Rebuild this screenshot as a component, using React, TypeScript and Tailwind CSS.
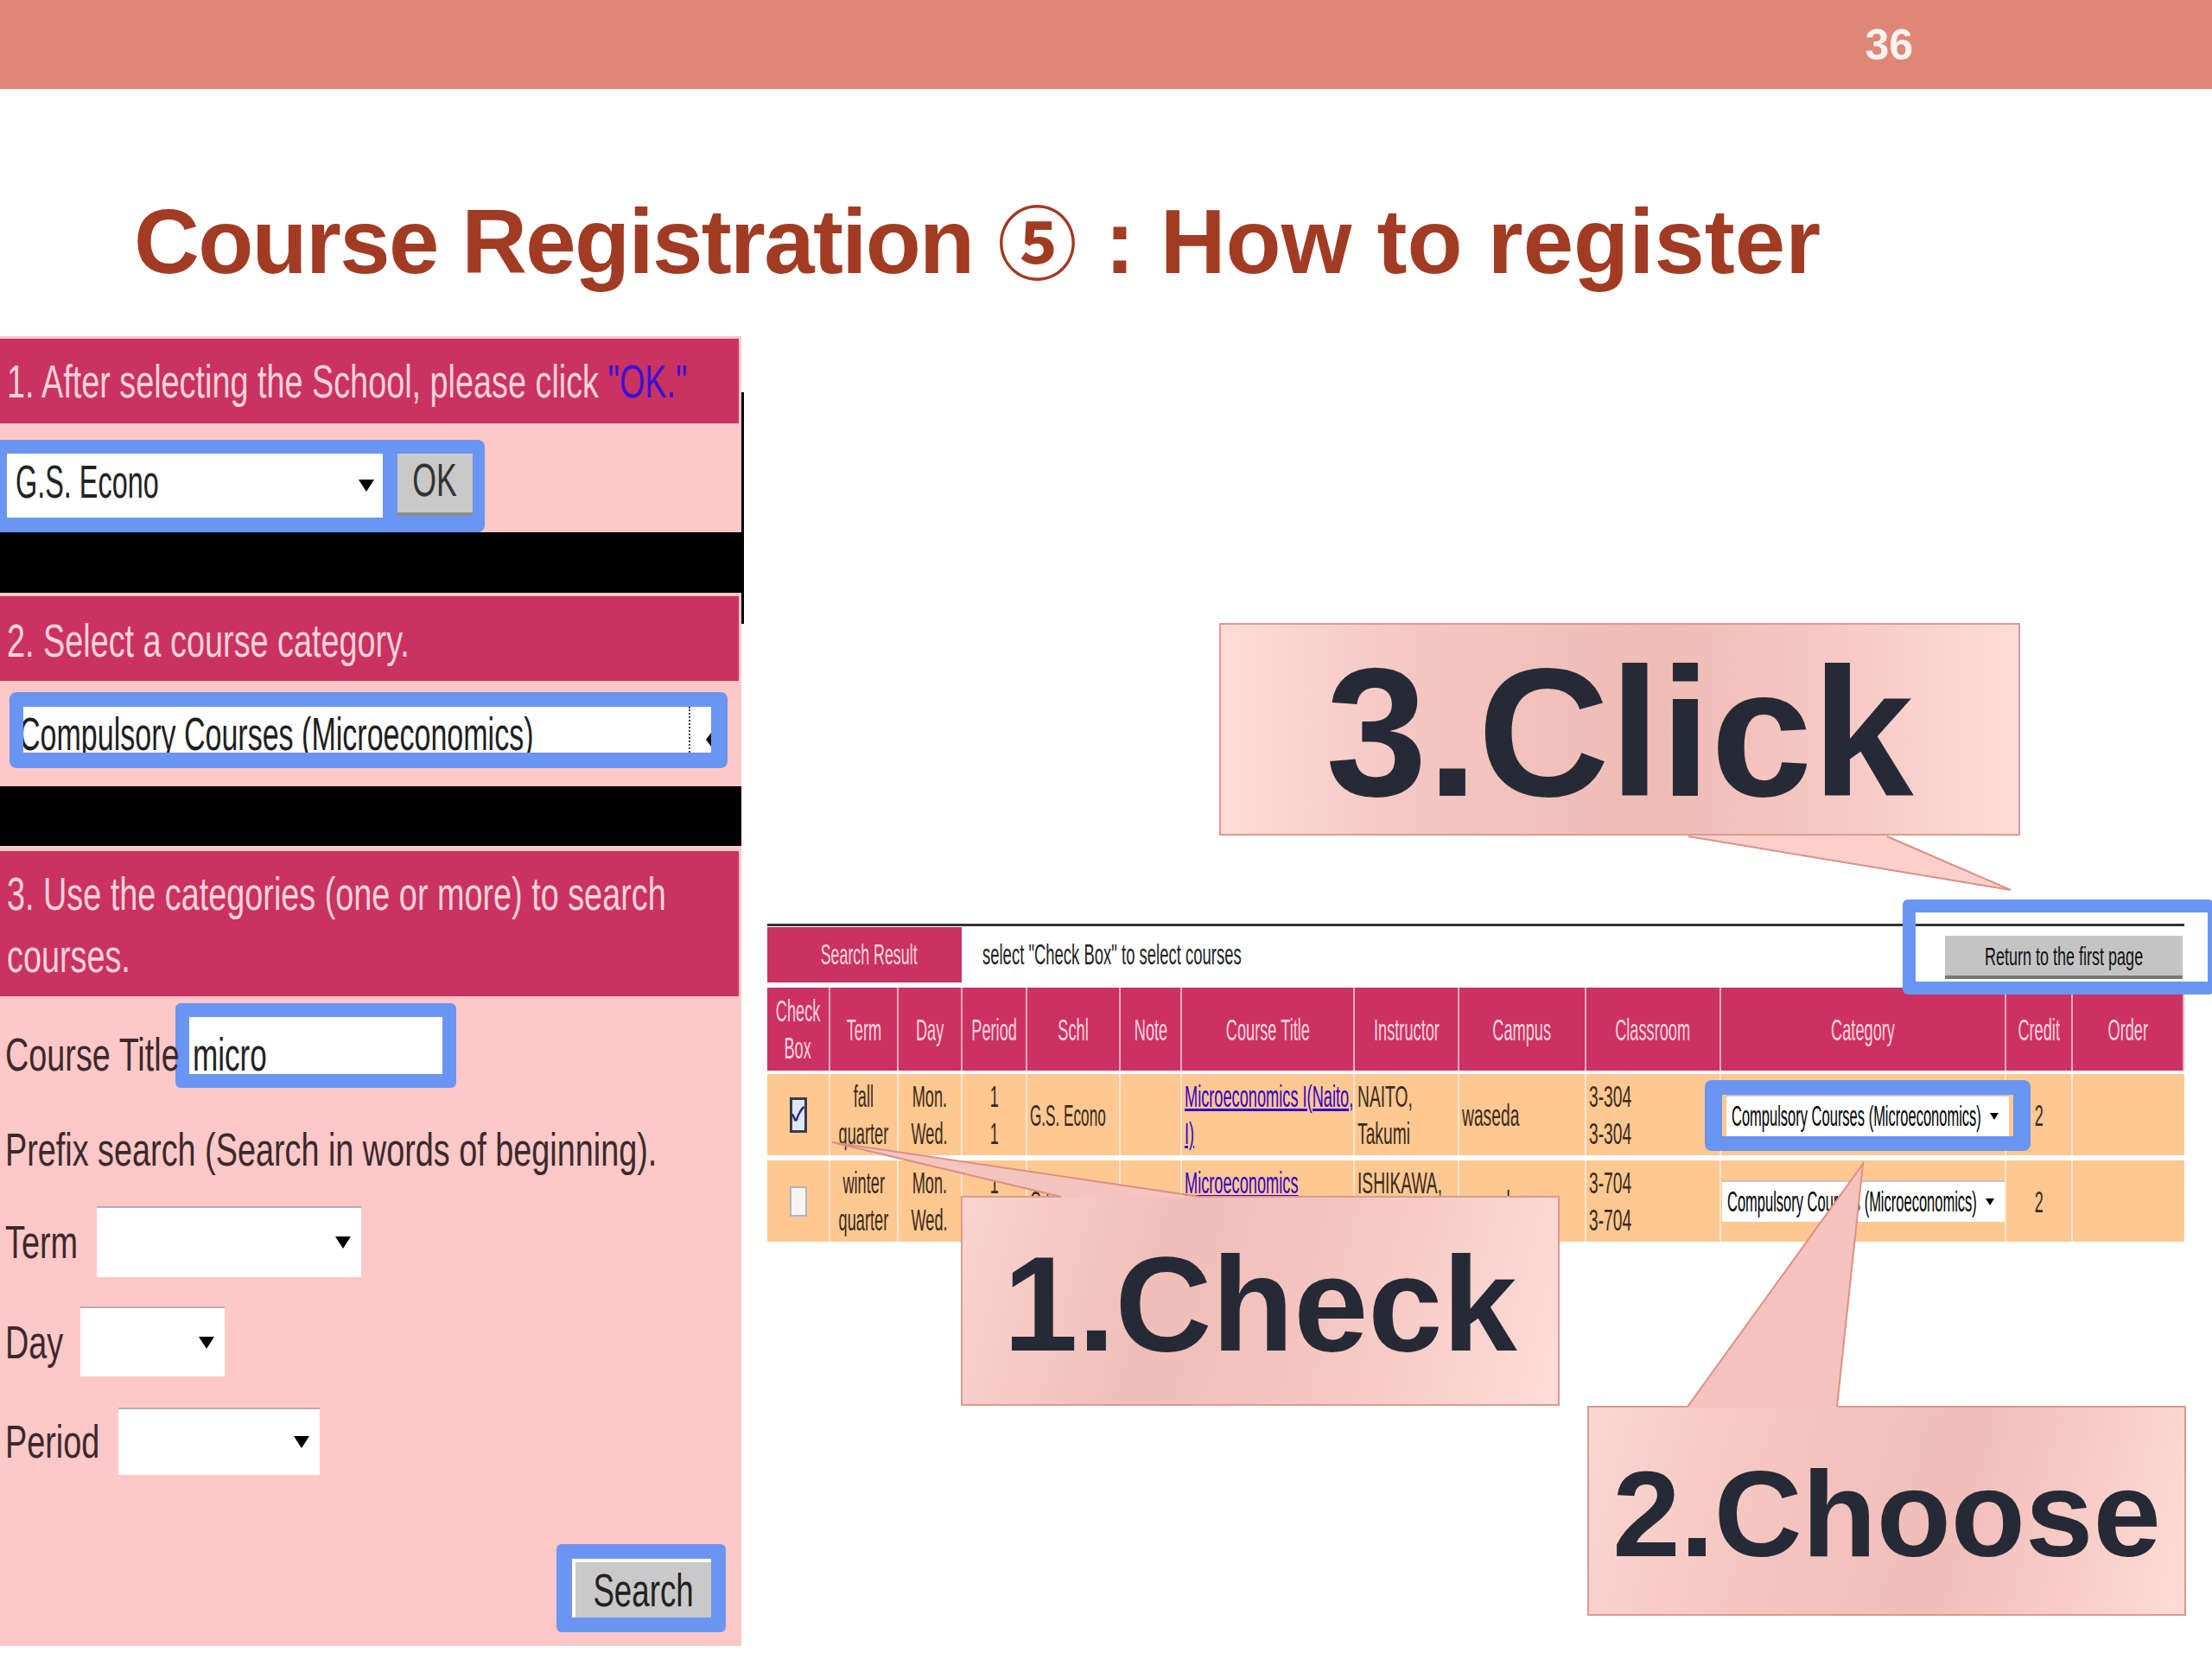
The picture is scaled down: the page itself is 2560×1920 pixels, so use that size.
import type { ReactNode } from 'react'

const COLS = 'grid grid-cols-[73px_79px_74px_75px_108px_71px_200px_121px_147px_156px_330px_77px_129px]'
const squeezeLeft = 'inline-block origin-left whitespace-nowrap scale-x-[0.55]'
const squeezeLink = 'inline-block origin-left whitespace-nowrap scale-x-[0.52] underline'
const squeezeMid = 'inline-block whitespace-nowrap scale-x-[0.52]'
const panelText = 'inline-block origin-left whitespace-nowrap scale-x-[0.7] text-[54px] leading-none'
const fieldText = 'inline-block origin-left whitespace-nowrap scale-x-[0.6] text-[54px] leading-none'

function Arrow({ small = false }: { readonly small?: boolean }) {
  return small ? (
    <span className="size-0 shrink-0 border-x-[5px] border-t-[8px] border-x-transparent border-t-black" />
  ) : (
    <span className="size-0 shrink-0 border-x-[9px] border-t-[14px] border-x-transparent border-t-black" />
  )
}

function PanelHeading({ children, className }: { readonly children: ReactNode; readonly className: string }) {
  return <div className={`w-[855px] bg-[#c93261] pl-2 text-[#fdd3da] ${className}`}>{children}</div>
}

function FilterRow({ label, labelWidth, selectWidth, className }: {
  readonly label: string
  readonly labelWidth: string
  readonly selectWidth: string
  readonly className: string
}) {
  return (
    <div className={`flex items-center pl-[6px] text-[#3b2a2c] ${className}`}>
      <div className={`shrink-0 ${labelWidth}`}>
        <span className={panelText}>{label}</span>
      </div>
      <div className={`flex h-full items-center justify-end border-t-2 border-[#b5adb5] bg-white pr-3 ${selectWidth}`}>
        <Arrow />
      </div>
    </div>
  )
}

function HeadCell({ children, className = '' }: { readonly children: ReactNode; readonly className?: string }) {
  return (
    <div className={`flex flex-col items-center justify-center border-r-2 border-[#f3a9c0] text-[35px] leading-[43px] text-[#fbd5dc] ${className}`}>
      {children}
    </div>
  )
}

function MidCell({ lines }: { readonly lines: string[] }) {
  return (
    <div className="flex flex-col items-center justify-center border-r-2 border-[#ffe6cf] text-[35px] leading-[43px] text-[#3a2a1c]">
      {lines.map((line, i) => (
        <span key={i} className={squeezeMid}>{line}</span>
      ))}
    </div>
  )
}

function LeftCell({ lines, link = false }: { readonly lines: string[]; readonly link?: boolean }) {
  return (
    <div className={`flex flex-col justify-center overflow-hidden border-r-2 border-[#ffe6cf] pl-[3px] text-[35px] leading-[43px] ${link ? 'text-[#3300cc]' : 'text-[#3a2a1c]'}`}>
      {lines.map((line, i) => (
        <span key={i} className={link ? squeezeLink : squeezeLeft}>{line}</span>
      ))}
    </div>
  )
}

function SchoolCell() {
  return (
    <div className="flex flex-col justify-center border-r-2 border-[#ffe6cf] pl-[3px] text-[35px] leading-[43px] text-[#3a2a1c]">
      <span className="inline-block origin-left scale-x-[0.49] whitespace-nowrap">G.S. Econo</span>
    </div>
  )
}

function CategorySelect() {
  return (
    <div className="flex h-[48px] w-[327px] items-center justify-between overflow-hidden border-t-2 border-[#c9c4c0] bg-white pl-[6px] pr-[12px] text-[33px] text-black">
      <span className="w-[292px] shrink-0">
        <span className="inline-block origin-left scale-x-[0.5] whitespace-nowrap">Compulsory Courses (Microeconomics)</span>
      </span>
      <Arrow small />
    </div>
  )
}

function Row({ term, room, title, who, checked }: {
  readonly term: string
  readonly room: string
  readonly title: string[]
  readonly who: string[]
  readonly checked: boolean
}) {
  return (
    <div className={`${COLS} h-[94px] bg-[#fdc891]`}>
      <div className="flex items-center justify-center border-r-2 border-[#ffe6cf]">
        {checked ? (
          <span className="flex h-[41px] w-[20px] items-center justify-center border-[3px] border-[#3a3a4a] bg-[#dfe6f7] text-[22px] font-bold leading-none text-[#2a2a70]">✓</span>
        ) : (
          <span className="h-[35px] w-[20px] border-2 border-[#b5b5b5] bg-[#f5f5f5]" />
        )}
      </div>
      <MidCell lines={[term, 'quarter']} />
      <MidCell lines={['Mon.', 'Wed.']} />
      <MidCell lines={['1', '1']} />
      <SchoolCell />
      <LeftCell lines={[]} />
      <LeftCell lines={title} link />
      <LeftCell lines={who} />
      <LeftCell lines={['waseda']} />
      <LeftCell lines={[room, room]} />
      <div className="flex items-center justify-center border-r-2 border-[#ffe6cf]">
        {!checked && <CategorySelect />}
      </div>
      <MidCell lines={['2']} />
      <div />
    </div>
  )
}

function Callout({ position, gradient, tail, tailFill, size, children }: {
  readonly position: string
  readonly gradient: string
  readonly tail: [string, string]
  readonly tailFill: string
  readonly size: string
  readonly children: ReactNode
}) {
  return (
    <div className={`absolute flex items-center justify-center border-2 border-[#dd9a90] font-bold leading-none text-[#262a36] ${position} ${gradient} ${size}`}>
      <svg className="absolute -left-[2px] -top-[2px] size-full overflow-visible">
        <polygon points={tail[0]} fill={tailFill} />
        <polyline points={tail[1]} fill="none" stroke="#dd8f85" strokeWidth="2" />
      </svg>
      <span className="relative">{children}</span>
    </div>
  )
}

export default function App() {
  return (
    <div className="relative h-[1920px] w-[2560px] overflow-hidden bg-white font-['Liberation_Sans','Noto_Sans_CJK_JP',sans-serif]">
      <header className="flex h-[103px] items-center justify-end bg-[#de8778] pr-[346px] pt-[2px] text-[50px] font-bold text-[#fdf3ef]">
        36
      </header>
      <h1 className="flex h-[286px] items-baseline whitespace-pre pl-[155px] pt-[124px] text-[105px] font-bold leading-none text-[#a23b23]">
        <span className="tracking-[-0.016em]">Course Registration</span>
        <span className="ml-[28px] text-[92px]">⑤</span>
        <span className="ml-[32px]">: How to register</span>
      </h1>

      <div className="flex items-start">
        <section className="relative flex h-[1516px] w-[858px] shrink-0 flex-col bg-[#ffc8c8] pt-[3px]">
          <span className="absolute -right-[3px] top-[65px] h-[268px] w-[3px] bg-black" />

          <PanelHeading className="flex h-[98px] items-center">
            <span className={panelText}>
              1. After selecting the School, please click <span className="text-[#3a10d8]">"OK."</span>
            </span>
          </PanelHeading>

          <div className="mt-[19px] flex h-[107px] w-[561px] items-start gap-[17px] rounded-r-lg bg-[#6a95f3] pl-2 pt-4">
            <div className="flex h-[74px] w-[435px] items-center justify-between bg-white pl-[10px] pr-[10px] text-[#222]">
              <span className={`${fieldText} -mt-[10px]`}>G.S. Econo</span>
              <Arrow />
            </div>
            <div className="flex h-[72px] w-[87px] items-center justify-center border-b-4 border-[#8d8d8d] bg-[#c9c9c9] pb-[8px] text-[#333]">
              <span className="inline-block scale-x-[0.66] text-[54px] leading-none">OK</span>
            </div>
          </div>

          <div className="h-[70px] w-full bg-black" />

          <PanelHeading className="mt-1 flex h-[98px] items-center pt-[4px]">
            <span className={panelText}>2. Select a course category.</span>
          </PanelHeading>

          <div className="ml-[11px] mt-[13px] h-[88px] w-[831px] rounded-lg bg-[#6a95f3] pl-4 pt-[17px]">
            <div className="relative flex h-[53px] w-[796px] items-center overflow-hidden bg-white pl-[1px] pt-[8px] text-[#1e1e1e]">
              <span className="-ml-[6px] inline-block origin-left scale-x-[0.63] whitespace-nowrap text-[54px] leading-none">Compulsory Courses (Microeconomics)</span>
              <span className="absolute left-[770px] top-0 h-full border-l-2 border-dotted border-[#444]" />
              <span className="absolute right-0 top-[30px] size-0 border-y-[8px] border-r-[6px] border-y-transparent border-r-black" />
            </div>
          </div>

          <div className="mt-[21px] h-[69px] w-full bg-black" />

          <PanelHeading className="mt-[6px] flex h-[168px] flex-col justify-center gap-[18px] pt-[2px]">
            <span className={panelText}>3. Use the categories (one or more) to search</span>
            <span className={panelText}>courses.</span>
          </PanelHeading>

          <div className="mt-2 flex h-[98px] items-center pl-[6px] text-[#3b2a2c]">
            <div className="w-[197px] shrink-0 pt-[20px]">
              <span className={panelText}>Course Title</span>
            </div>
            <div className="flex h-full w-[325px] items-end overflow-hidden rounded-md border-[16px] border-[#6a95f3] bg-white pl-[4px] text-[#222]">
              <span className="-mb-[4px] inline-block origin-left scale-x-[0.65] whitespace-nowrap text-[54px] leading-none">micro</span>
            </div>
          </div>

          <p className="mt-[44px] h-[53px] pl-[6px] text-[#3b2a2c]">
            <span className={panelText}>Prefix search (Search in words of beginning).</span>
          </p>

          <FilterRow label="Term" labelWidth="w-[106px]" selectWidth="w-[306px]" className="mt-[40px] h-[82px]" />
          <FilterRow label="Day" labelWidth="w-[87px]" selectWidth="w-[167px]" className="mt-[34px] h-[81px]" />
          <FilterRow label="Period" labelWidth="w-[131px]" selectWidth="w-[233px]" className="mt-[36px] h-[78px]" />

          <div className="ml-[644px] mt-[80px] h-[102px] w-[196px] rounded-md bg-[#6a95f3] pl-[18px] pt-[17px]">
            <div className="flex h-[68px] w-[161px] items-center justify-center border-l-4 border-t-4 border-white bg-[#c9c9c9] text-[#222]">
              <span className="inline-block scale-x-[0.68] text-[54px] leading-none">Search</span>
            </div>
          </div>
        </section>

        <section className="ml-[30px] mt-[680px] w-[1640px]">
          <div className="relative h-[74px] border-t-[3px] border-[#333]">
            <div className="mt-[1px] flex">
              <div className="flex h-[64px] w-[225px] items-center justify-center bg-[#c93261] pl-[10px] text-[33px] text-[#fbd5dc]">
                <span className="inline-block scale-x-[0.54] whitespace-nowrap">Search Result</span>
              </div>
              <div className="flex h-[64px] items-center pl-[24px] text-[33px] text-[#222]">
                <span className="inline-block origin-left scale-x-[0.56] whitespace-nowrap">select "Check Box" to select courses</span>
              </div>
            </div>
            <div className="absolute left-[1363px] top-[11px] flex h-[50px] w-[275px] items-center justify-center border-b-4 border-[#777] bg-[#c4c4c4] text-[30px] text-[#111]">
              <span className="inline-block scale-x-[0.6] whitespace-nowrap">Return to the first page</span>
            </div>
          </div>

          <div className={`${COLS} h-[96px] bg-[#cc3163]`}>
            <HeadCell>
              <span className={squeezeMid}>Check</span>
              <span className={squeezeMid}>Box</span>
            </HeadCell>
            {['Term', 'Day', 'Period', 'Schl', 'Note', 'Course Title', 'Instructor', 'Campus', 'Classroom', 'Category', 'Credit'].map((name) => (
              <HeadCell key={name}>
                <span className={squeezeMid}>{name}</span>
              </HeadCell>
            ))}
            <HeadCell className="border-r-0">
              <span className={squeezeMid}>Order</span>
            </HeadCell>
          </div>

          <div className="mt-1">
            <Row term="fall" room="3-304" title={['Microeconomics I(Naito,', 'I)']} who={['NAITO,', 'Takumi']} checked />
          </div>
          <div className="mt-[6px]">
            <Row term="winter" room="3-704" title={['Microeconomics', '\u00a0']} who={['ISHIKAWA,', '\u00a0']} checked={false} />
          </div>
        </section>
      </div>

      {/* blue highlights over the result table */}
      <div className="absolute left-[2202px] top-[1041px] h-[110px] w-[360px] rounded-md border-y-[15px] border-l-[15px] border-r-[7px] border-[#6a95f3]" />
      <div className="absolute left-[1973px] top-[1250px] flex h-[82px] w-[377px] items-center justify-center rounded-lg border-x-[20px] border-y-[17px] border-[#6a95f3]">
        <CategorySelect />
      </div>

      <Callout
        position="left-[1411px] top-[721px]"
        size="h-[246px] w-[927px] pt-[8px] text-[211px]"
        gradient="bg-[linear-gradient(90deg,#fddcd8_0%,#f4c6c1_25%,#efbbb5_55%,#f7cbc6_80%,#fddcd8_100%)]"
        tail={['543,246 916,309 773,246', '543,247 916,309 773,247']}
        tailFill="#fbd0cb"
      >
        3.Click
      </Callout>
      <Callout
        position="left-[1112px] top-[1384px]"
        size="h-[243px] w-[693px] pt-[8px] text-[155px]"
        gradient="bg-[linear-gradient(105deg,#fad4cf_0%,#efbdb8_35%,#f6c8c3_65%,#fddcd8_100%)]"
        tail={['116,2 -149,-62 277,2', '116,1 -149,-62 277,1']}
        tailFill="#f4c4bf"
      >
        1.Check
      </Callout>
      <Callout
        position="left-[1837px] top-[1627px]"
        size="h-[243px] w-[693px] pt-[8px] text-[141px]"
        gradient="bg-[linear-gradient(105deg,#fbd6d1_0%,#f5c6c1_30%,#f0bdb8_60%,#f8ccc7_80%,#fddcd8_100%)]"
        tail={['116,2 319,-280 289,2', '116,1 319,-280 289,1']}
        tailFill="#f6c2be"
      >
        2.Choose
      </Callout>
    </div>
  )
}
